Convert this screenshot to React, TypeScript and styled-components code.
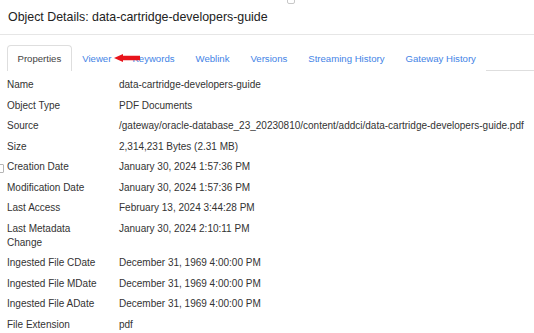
import React from "react";
import styled, { createGlobalStyle } from "styled-components";

const GlobalStyle = createGlobalStyle`
    html, body {
        margin: 0;
        padding: 0;
        background: #ffffff;
    }
    body {
        font-family: "Liberation Sans", Arial, sans-serif;
        color: #333333;
        overflow: hidden;
    }
`

const Page = styled.div`
    position: relative;
    width: 534px;
    height: 333px;
    overflow: hidden;
`

const Header = styled.div`
    height: 35px;
    display: flex;
    align-items: center;
    padding: 0 8px;
    border-bottom: 1px solid #e6e6e6;
    box-sizing: border-box;
`

const Title = styled.h1`
    margin: 0;
    font-size: 12.4px;
    font-weight: 400;
    color: #222222;
`

const TabBar = styled.div`
    position: relative;
    display: flex;
    margin: 10px 0 0 7px;
    border-bottom: 1px solid #dedede;
`

interface ITab {
    active?: boolean;
}

const Tab = styled.div<ITab>`
    height: 26px;
    display: flex;
    align-items: center;
    padding: 0 9.5px;
    box-sizing: border-box;
    font-size: 9.6px;
    color: ${(props) => (props.active ? "#444444" : "#4484e6")};
    background: #ffffff;
    border: 1px solid ${(props) => (props.active ? "#dedede" : "transparent")};
    border-bottom: none;
    border-radius: 4px 4px 0 0;
    margin-bottom: -1px;
    white-space: nowrap;
`

const Arrow = styled.svg`
    position: absolute;
    left: 107px;
    top: 8px;
`

const Table = styled.div`
    display: grid;
    grid-template-columns: 112px 1fr;
    padding: 4px 0 0 7px;
`

const Label = styled.div`
    font-size: 10px;
    line-height: 14px;
    padding: 3px 8px 3.5px 0;
    color: #333333;
    white-space: pre-line;
`

const Value = styled.div`
    font-size: 10px;
    line-height: 14px;
    padding: 3px 0 3.5px 0;
    color: #333333;
    white-space: nowrap;
`

const CornerBox = styled.div`
    position: absolute;
    left: 287px;
    top: -3px;
    width: 6px;
    height: 5px;
    border: 1px solid #c8c8c8;
    border-radius: 2px;
`

const EdgeBox = styled.div`
    position: absolute;
    left: -4px;
    top: 164px;
    width: 6px;
    height: 7px;
    border: 1px solid #b5b5b5;
    border-radius: 1px;
`

const tabs = ["Properties", "Viewer", "Keywords", "Weblink", "Versions", "Streaming History", "Gateway History"];

const rows: [string, string][] = [
    ["Name", "data-cartridge-developers-guide"],
    ["Object Type", "PDF Documents"],
    ["Source", "/gateway/oracle-database_23_20230810/content/addci/data-cartridge-developers-guide.pdf"],
    ["Size", "2,314,231 Bytes (2.31 MB)"],
    ["Creation Date", "January 30, 2024 1:57:36 PM"],
    ["Modification Date", "January 30, 2024 1:57:36 PM"],
    ["Last Access", "February 13, 2024 3:44:28 PM"],
    ["Last Metadata\nChange", "January 30, 2024 2:10:11 PM"],
    ["Ingested File CDate", "December 31, 1969 4:00:00 PM"],
    ["Ingested File MDate", "December 31, 1969 4:00:00 PM"],
    ["Ingested File ADate", "December 31, 1969 4:00:00 PM"],
    ["File Extension", "pdf"],
];

function App() {
    return (
        <Page>
            <GlobalStyle />
            <CornerBox />
            <EdgeBox />
            <Header>
                <Title>Object Details: data-cartridge-developers-guide</Title>
            </Header>
            <TabBar>
                {tabs.map((t, i) => (
                    <Tab key={t} active={i === 0}>{t}</Tab>
                ))}
                <Arrow width="26" height="10" viewBox="0 0 26 10">
                    <path d="M0 5 L9 1 L9 2.8 L26 2.8 L26 7.2 L9 7.2 L9 9 Z" fill="#e8141b" />
                </Arrow>
            </TabBar>
            <Table>
                {rows.map(([k, v]) => (
                    <React.Fragment key={k}>
                        <Label>{k}</Label>
                        <Value>{v}</Value>
                    </React.Fragment>
                ))}
            </Table>
        </Page>
    );
}

export default App;
